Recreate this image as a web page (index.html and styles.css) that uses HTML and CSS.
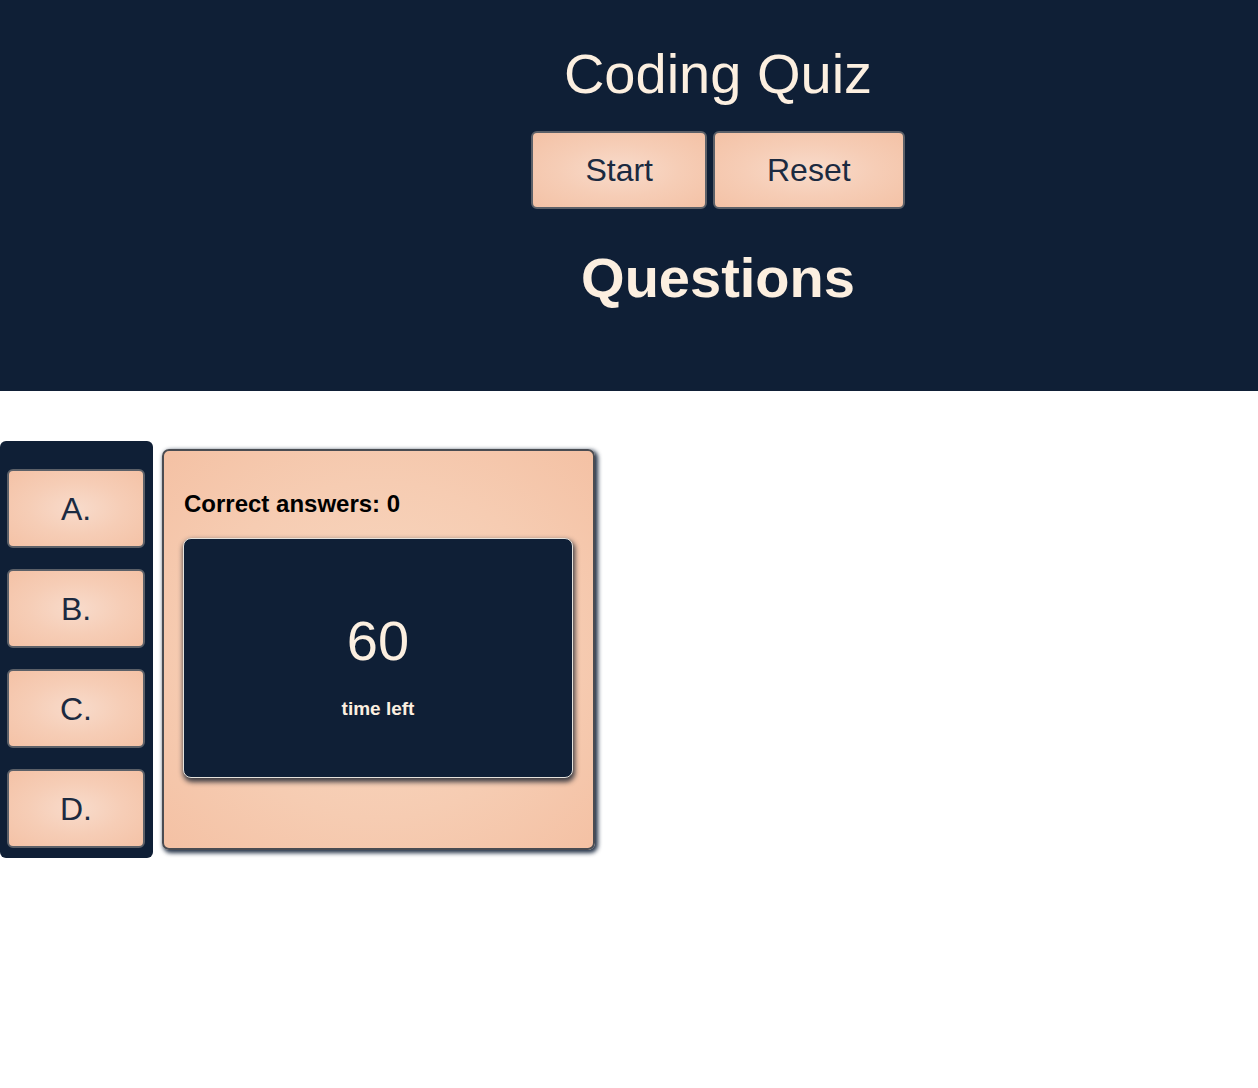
FILE: index.html
```html
<!DOCTYPE html>
<html lang="en">
<head>
<meta charset="utf-8">
<title>Coding Quiz</title>
<link rel="stylesheet" href="styles.css">
</head>
<body>
<header class="header">
  <h1 class="title">Coding Quiz</h1>
  <div class="controls">
    <button class="btn">Start</button>
    <button class="btn">Reset</button>
  </div>
  <h2 class="questions">Questions</h2>
</header>
<main class="quiz">
  <div class="answers">
    <button class="answer">A.</button>
    <button class="answer">B.</button>
    <button class="answer">C.</button>
    <button class="answer">D.</button>
  </div>
  <section class="card">
    <p class="score">Correct answers: 0</p>
    <div class="timer">
      <div class="time">60</div>
      <div class="time-label">time left</div>
    </div>
  </section>
</main>
</body>
</html>
```

FILE: styles.css
```css
* { box-sizing: border-box; }
body {
  margin: 0;
  background: #ffffff;
  font-family: "Liberation Sans", Arial, sans-serif;
}
.header {
  background: #0f1f36;
  height: 391px;
  padding: 42px 0 0 178px;
  text-align: center;
  color: #fcefe0;
}
.title {
  margin: 0;
  font-size: 56px;
  font-weight: normal;
  line-height: 63px;
}
.controls {
  margin-top: 26px;
  display: flex;
  justify-content: center;
  gap: 6px;
}
.btn, .answer {
  font-family: "Liberation Sans", Arial, sans-serif;
  font-size: 32px;
  line-height: 36px;
  color: #1b2a40;
  border: 2px solid #5c6068;
  border-radius: 6px;
  background: radial-gradient(ellipse at center, #f8dbcb 0%, #f6cdb6 50%, #f4c2a6 100%);
  cursor: pointer;
}
.btn {
  padding: 19px 52px;
}
.questions {
  margin: 37px 0 0;
  font-size: 56px;
  font-weight: bold;
  line-height: 63px;
}
.quiz {
  margin-top: 50px;
  display: flex;
  align-items: flex-start;
}
.answers {
  width: 153px;
  background: #0f1f36;
  border-radius: 6px;
  padding: 28px 8px 10px 7px;
  display: flex;
  flex-direction: column;
  gap: 21px;
}
.answer {
  width: 138px;
  height: 79px;
  padding: 0;
}
.card {
  margin: 8px 0 0 9px;
  width: 433px;
  height: 401px;
  border: 2px solid #4a4c52;
  border-radius: 7px;
  background: radial-gradient(ellipse at center, #f8d9c2 0%, #f6ccb2 60%, #f4c1a4 100%);
  box-shadow: 2px 2px 4px 1px rgba(15, 31, 54, 0.9);
  padding: 0 19px;
}
.score {
  margin: 39px 0 0 1px;
  font-size: 24px;
  font-weight: bold;
  line-height: 28px;
  color: #000;
}
.timer {
  margin-top: 20px;
  width: 390px;
  height: 240px;
  background: #0f1f36;
  border: 1px solid #e6e2dc;
  border-radius: 8px;
  box-shadow: 1px 3px 5px 1px rgba(15, 25, 40, 0.8);
  padding-top: 70px;
  text-align: center;
  color: #fcefe0;
}
.time {
  font-size: 56px;
  line-height: 64px;
}
.time-label {
  margin-top: 25px;
  font-size: 19px;
  font-weight: bold;
  line-height: 22px;
}
```
